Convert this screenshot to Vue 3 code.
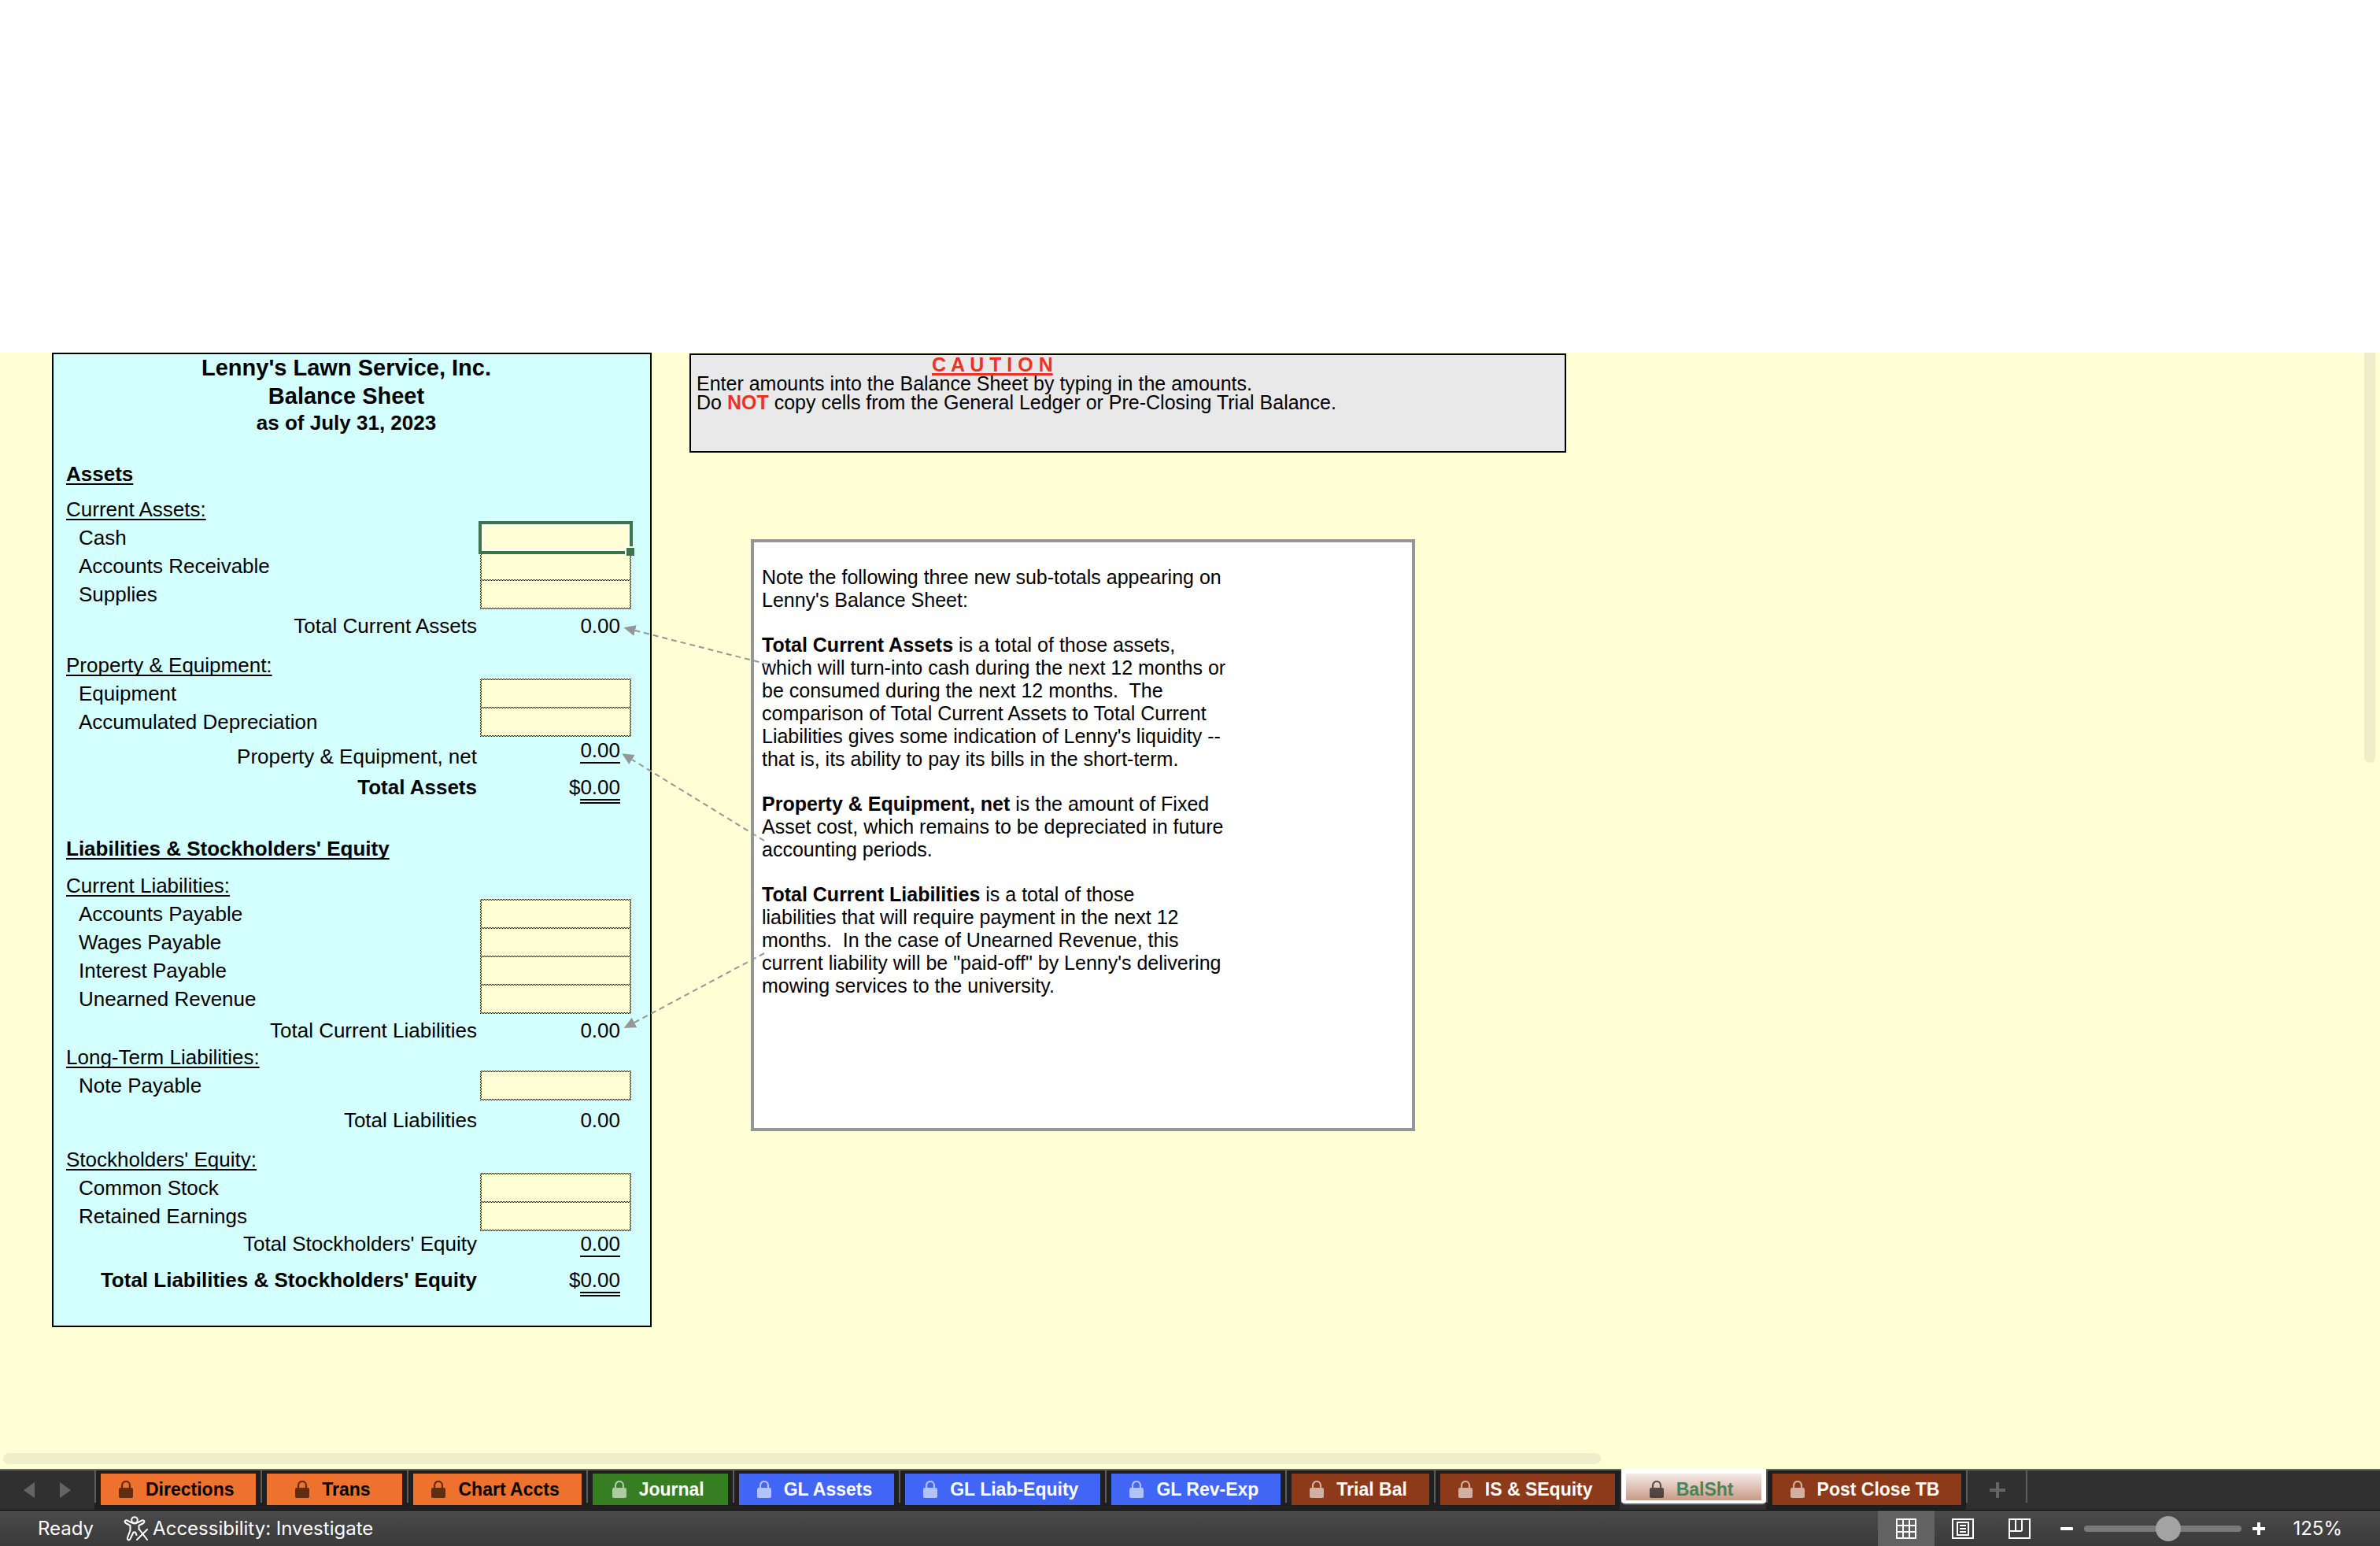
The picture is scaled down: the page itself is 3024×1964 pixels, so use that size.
<template>
    <div class="window">
        <header class="ribbon"></header>

        <main class="canvas">
            <table class="sheet">
                <colgroup>
                    <col class="col-label" />
                    <col class="col-amount" />
                    <col class="col-edge" />
                </colgroup>
                <tbody>
                    <tr v-for="row in rows" :key="row.text" :style="{ height: row.height + 'px' }">
                        <th v-if="row.type === 'title'" class="title" :class="{ small: row.small }" colspan="3">{{ row.text }}</th>
                        <th v-else-if="row.type === 'heading'" class="heading" :class="{ bold: row.bold }" colspan="3">
                            <span>{{ row.text }}</span>
                        </th>
                        <template v-else-if="row.type === 'entry'">
                            <th class="entry-label"><label :for="row.id">{{ row.text }}</label></th>
                            <td class="entry" :class="{ selected: row.id === selected }">
                                <input :id="row.id" v-model="amounts[row.id]" type="text" @focus="selected = row.id" />
                            </td>
                            <td></td>
                        </template>
                        <template v-else>
                            <th class="total-label" :class="{ bold: row.bold }">{{ row.text }}</th>
                            <td class="total" :class="{ raised: row.raised }">
                                <template v-if="row.line === 'double'">$</template><span :class="row.line">0.00</span>
                            </td>
                            <td></td>
                        </template>
                    </tr>
                </tbody>
            </table>

            <div class="side">
                <section class="caution">
                    <h2>C A U T I O N</h2>
                    <p>Enter amounts into the Balance Sheet by typing in the amounts.</p>
                    <p>Do <strong>NOT</strong> copy cells from the General Ledger or Pre-Closing Trial Balance.</p>
                </section>

                <section class="notes">
                    <p v-for="note in notes" :key="note.text"><strong v-if="note.term">{{ note.term }}</strong>{{ note.text }}</p>
                </section>
            </div>

            <svg class="arrows" width="1000" height="900" viewBox="0 0 1000 900">
                <defs>
                    <marker id="head" viewBox="0 0 15 14" refX="0" refY="7" markerWidth="15" markerHeight="14" markerUnits="userSpaceOnUse" orient="auto">
                        <path d="M0 0L15 7L0 14z" fill="#969696" />
                    </marker>
                </defs>
                <g stroke="#969696" stroke-width="2" stroke-dasharray="7 5">
                    <path d="M976 396L807 353" marker-end="url(#head)" />
                    <path d="M971 620L803 517" marker-end="url(#head)" />
                    <path d="M971 763L806 851" marker-end="url(#head)" />
                </g>
            </svg>

            <div class="scroll-x"></div>
            <div class="scroll-y"></div>
        </main>

        <nav class="tabs">
            <div class="tab-arrows">
                <button type="button" aria-label="Previous sheet">
                    <svg width="14" height="20" viewBox="0 0 14 20"><path d="M14 0v20L0 10z" /></svg>
                </button>
                <button type="button" aria-label="Next sheet">
                    <svg width="14" height="20" viewBox="0 0 14 20"><path d="M0 0v20l14-10z" /></svg>
                </button>
            </div>
            <div v-for="tab in tabs" :key="tab.name" class="slot" :class="{ current: tab.name === current }">
                <button type="button" class="tab" :class="tab.color" @click="current = tab.name">
                    <svg class="lock" width="18" height="22" viewBox="0 0 18 22">
                        <path d="M4 10V6a5 5 0 0 1 10 0v4" fill="none" stroke="currentColor" stroke-width="2.200" />
                        <rect y="9" width="18" height="13" rx="2" fill="currentColor" />
                    </svg>
                    <span>{{ tab.name }}</span>
                </button>
            </div>
            <div class="rest">
                <button type="button" class="add" aria-label="Add sheet">
                    <svg width="20" height="20" viewBox="0 0 20 20"><path d="M8 0h4v8h8v4h-8v8h-4v-8h-8v-4h8z" /></svg>
                </button>
            </div>
        </nav>

        <footer class="status">
            <span class="ready">Ready</span>
            <button type="button" class="access">
                <svg width="32" height="32" viewBox="0 0 32 32" fill="none" stroke="currentColor" stroke-width="2" stroke-linecap="round" stroke-linejoin="round">
                    <circle cx="14" cy="5" r="3.800" />
                    <path d="M9.500 8L4.500 5.500C2 4.500.500 7.500 2.800 9L8.500 12V18L5 27.500C4.200 30.500 7.500 31.500 8.500 29L12.500 20.500H15L16.500 24" />
                    <path d="M18.500 8L23.500 5.500C26 4.500 27.500 7.500 25.200 9L19.500 12V17" />
                    <path d="M9.500 8Q14 11 18.500 8" />
                    <path d="M17 30L30 17M20 17L30 30" />
                </svg>
                <span>Accessibility: Investigate</span>
            </button>

            <div class="views">
                <button type="button" class="on" aria-label="Normal view">
                    <svg width="28" height="28" viewBox="0 0 28 28"><path d="M2 2h24v24H2zM10 2v24M18 2v24M2 10h24M2 18h24" /></svg>
                </button>
                <button type="button" aria-label="Page layout view">
                    <svg width="28" height="28" viewBox="0 0 28 28"><path d="M1 2h26v24H1zM7 6h14v16H7zM10 10h8M10 14h8M10 18h8" /></svg>
                </button>
                <button type="button" aria-label="Page break preview">
                    <svg width="28" height="28" viewBox="0 0 28 28"><path d="M1 2h26v24H1zM9 2v15M17 2v15M1 17h16" /></svg>
                </button>
            </div>
            <button type="button" class="step" aria-label="Zoom out">
                <svg width="16" height="16" viewBox="0 0 16 16"><rect y="6" width="16" height="4" rx="1" /></svg>
            </button>
            <input v-model="zoom" class="zoom" type="range" min="0" max="100" aria-label="Zoom" />
            <button type="button" class="step" aria-label="Zoom in">
                <svg width="16" height="16" viewBox="0 0 16 16"><path d="M6 0h4v6h6v4h-6v6h-4v-6h-6v-4h6z" /></svg>
            </button>
            <span class="percent">125%</span>
        </footer>
    </div>
</template>

<script setup>
    import { ref } from "vue";

    const selected = ref("cash");
    const current = ref("BalSht");
    const zoom = ref(54);
    const amounts = ref({});

    const rows = [
        { type: "title", text: "Lenny's Lawn Service, Inc.", height: 35 },
        { type: "title", text: "Balance Sheet", height: 36 },
        { type: "title", text: "as of July 31, 2023", height: 34, small: true },
        { type: "heading", text: "Assets", height: 65, bold: true },
        { type: "heading", text: "Current Assets:", height: 45 },
        { type: "entry", id: "cash", text: "Cash", height: 36 },
        { type: "entry", id: "receivable", text: "Accounts Receivable", height: 36 },
        { type: "entry", id: "supplies", text: "Supplies", height: 36 },
        { type: "total", text: "Total Current Assets", height: 40 },
        { type: "heading", text: "Property & Equipment:", height: 50 },
        { type: "entry", id: "equipment", text: "Equipment", height: 36 },
        { type: "entry", id: "depreciation", text: "Accumulated Depreciation", height: 36 },
        { type: "total", text: "Property & Equipment, net", height: 44, line: "single", raised: true },
        { type: "total", text: "Total Assets", height: 39, line: "double", bold: true },
        { type: "heading", text: "Liabilities & Stockholders' Equity", height: 78, bold: true },
        { type: "heading", text: "Current Liabilities:", height: 47 },
        { type: "entry", id: "payable", text: "Accounts Payable", height: 36 },
        { type: "entry", id: "wages", text: "Wages Payable", height: 36 },
        { type: "entry", id: "interest", text: "Interest Payable", height: 36 },
        { type: "entry", id: "unearned", text: "Unearned Revenue", height: 36 },
        { type: "total", text: "Total Current Liabilities", height: 40 },
        { type: "heading", text: "Long-Term Liabilities:", height: 34 },
        { type: "entry", id: "note", text: "Note Payable", height: 36 },
        { type: "total", text: "Total Liabilities", height: 44 },
        { type: "heading", text: "Stockholders' Equity:", height: 50 },
        { type: "entry", id: "stock", text: "Common Stock", height: 36 },
        { type: "entry", id: "retained", text: "Retained Earnings", height: 36 },
        { type: "total", text: "Total Stockholders' Equity", height: 35, line: "single" },
        { type: "total", text: "Total Liabilities & Stockholders' Equity", height: 46, line: "double", bold: true },
    ];

    const notes = [
        { text: "Note the following three new sub-totals appearing on\nLenny's Balance Sheet:" },
        {
            term: "Total Current Assets",
            text: " is a total of those assets,\nwhich will turn-into cash during the next 12 months or\nbe consumed during the next 12 months.  The\ncomparison of Total Current Assets to Total Current\nLiabilities gives some indication of Lenny's liquidity --\nthat is, its ability to pay its bills in the short-term.",
        },
        {
            term: "Property & Equipment, net",
            text: " is the amount of Fixed\nAsset cost, which remains to be depreciated in future\naccounting periods.",
        },
        {
            term: "Total Current Liabilities",
            text: " is a total of those\nliabilities that will require payment in the next 12\nmonths.  In the case of Unearned Revenue, this\ncurrent liability will be \"paid-off\" by Lenny's delivering\nmowing services to the university.",
        },
    ];

    const tabs = [
        { name: "Directions", color: "orange" },
        { name: "Trans", color: "orange" },
        { name: "Chart Accts", color: "orange" },
        { name: "Journal", color: "green" },
        { name: "GL Assets", color: "blue" },
        { name: "GL Liab-Equity", color: "blue" },
        { name: "GL Rev-Exp", color: "blue" },
        { name: "Trial Bal", color: "brown" },
        { name: "IS & SEquity", color: "brown" },
        { name: "BalSht", color: "brown" },
        { name: "Post Close TB", color: "brown" },
    ];
</script>

<style>
body{
    margin: 0;
    background: #fff;
}
</style>

<style scoped>
.window{
    display: flex;
    flex-direction: column;
    min-height: 100vh;
    font-family: "Liberation Sans", Arial, sans-serif;
    color: #000;
}

button{
    border: 0;
    padding: 0;
    background: none;
    font: inherit;
    color: inherit;
}

svg{
    display: block;
    flex: none;
}

.ribbon{
    height: 448px;
}

.canvas{
    position: relative;
    flex: 1;
    display: flex;
    align-items: flex-start;
    gap: 48px;
    padding: 0 66px;
    background: #fffed5;
}

/* balance sheet */
.sheet{
    box-sizing: border-box;
    width: 762px;
    flex: none;
    table-layout: fixed;
    border-collapse: separate;
    border-spacing: 0;
    border: 2px solid #000;
    padding-bottom: 40px;
    background: #d4ffff;
    font-size: 26px;
    line-height: 30px;
}

.col-amount{
    width: 190px;
}

.col-edge{
    width: 25px;
}

.sheet th,
.sheet td{
    padding: 0 0 3px;
    vertical-align: bottom;
    text-align: left;
    font-weight: normal;
    white-space: nowrap;
}

.sheet .title{
    padding-right: 14px;
    text-align: center;
    font-size: 29px;
    font-weight: bold;
}

.sheet .small{
    font-size: 26px;
}

.sheet .heading{
    padding-left: 16px;
}

.heading span{
    text-decoration: underline;
    text-decoration-thickness: 2px;
    text-decoration-skip-ink: none;
    text-underline-offset: 3px;
}

.sheet .bold{
    font-weight: bold;
}

.sheet .entry-label{
    padding-left: 32px;
}

.sheet .total-label{
    padding-right: 5px;
    text-align: right;
}

.sheet .total{
    padding-right: 13px;
    text-align: right;
}

.sheet .raised{
    padding-bottom: 11px;
}

.single,
.double{
    display: inline-block;
}

.single{
    border-bottom: 2px solid #000;
    margin-bottom: -2px;
}

.double{
    border-bottom: 6px double #000;
    margin-bottom: -6px;
}

.sheet .entry{
    position: relative;
    padding: 0;
}

.sheet .selected{
    z-index: 1;
}

.entry input{
    display: block;
    box-sizing: border-box;
    width: calc(100% + 2px);
    height: 38px;
    margin: -1px;
    border: 2px solid transparent;
    padding: 0 12px;
    background:
        linear-gradient(#fffed5, #fffed5) padding-box,
        repeating-conic-gradient(#000 0 25%, #fffed5 0 50%) 0 0 / 2px 2px border-box;
    font: inherit;
    text-align: right;
    outline: none;
}

.selected::after{
    content: "";
    position: absolute;
    inset: -3px;
    border: 4px solid #3d754b;
    box-shadow: inset 0 0 0 2px #fff;
    pointer-events: none;
}

.selected::before{
    content: "";
    position: absolute;
    z-index: 1;
    right: -5px;
    bottom: -5px;
    width: 10px;
    height: 10px;
    border: solid #fff;
    border-width: 2px 0 0 2px;
    background: #3d754b;
}

/* boxes to the right */
.side{
    flex: none;
    font-size: 25px;
}

.caution{
    box-sizing: border-box;
    width: 1114px;
    min-height: 126px;
    margin-top: 1px;
    border: 2px solid #000;
    padding: 0 7px;
    background: #e9e9e9;
    line-height: 24px;
}

.caution h2{
    margin: 0;
    padding-left: 299px;
    font-size: 25px;
    color: #ed3224;
    text-decoration: underline;
    text-decoration-thickness: 3px;
    text-underline-offset: 2px;
}

.caution p{
    margin: 0;
}

.caution strong{
    color: #ed3224;
}

.notes{
    box-sizing: border-box;
    width: 844px;
    min-height: 752px;
    margin: 110px 0 0 78px;
    border: 4px solid #969696;
    padding: 30px 10px;
    background: #fff;
    line-height: 29px;
}

.notes p{
    margin: 0 0 28px;
    white-space: pre-wrap;
}

.arrows{
    position: absolute;
    left: 0;
    top: 0;
    pointer-events: none;
}

.scroll-x,
.scroll-y{
    position: absolute;
    background: #eeeecb;
}

.scroll-x{
    left: 4px;
    bottom: 6px;
    width: 2030px;
    height: 14px;
    border-radius: 7px;
}

.scroll-y{
    right: 6px;
    top: 0;
    width: 14px;
    height: 521px;
    border-radius: 0 0 7px 7px;
}

/* sheet tabs */
.tabs{
    display: flex;
    height: 50px;
    border-top: 2px solid #6a6a68;
    background: #1f1f1f;
    font-size: 23px;
    font-weight: bold;
}

.tab-arrows{
    display: flex;
    align-items: center;
    gap: 32px;
    width: 90px;
    padding-left: 30px;
    background: #303030;
    fill: #646464;
}

.slot{
    position: relative;
    padding: 4px 6px 0 8px;
}

.slot::before,
.rest::before,
.rest::after{
    content: "";
    position: absolute;
    left: 0;
    top: 0;
    width: 2px;
    height: 41px;
    background: #5c5c5c;
}

.tab{
    display: flex;
    align-items: center;
    justify-content: center;
    gap: 16px;
    box-sizing: border-box;
    min-width: 172px;
    height: 40px;
    padding: 0 28px 0 23px;
    white-space: nowrap;
}

.lock{
    opacity: 0.6;
}

.orange{
    background: #ee722e;
    color: #000;
}

.green{
    background: #377d22;
    color: #fff;
}

.blue{
    background: #4166f5;
    color: #fff;
}

.brown{
    background: #8c3a19;
    color: #fff;
}

.current{
    background: #303030;
}

.current::before{
    left: 2px;
    right: 0;
    top: -2px;
    width: auto;
    height: 44px;
    border-bottom: 2px solid #55585c;
    border-radius: 0 0 5px 5px;
    background: #fff;
}

.current .tab{
    position: relative;
    height: 34px;
    padding-top: 6px;
    background: linear-gradient(#f5ebe8, #c99a87);
    color: #44855a;
}

.current .lock{
    color: #000;
}

.rest{
    position: relative;
    flex: 1;
    display: flex;
    align-items: center;
    padding-left: 30px;
    background: #303030;
    fill: #646464;
}

.rest::after{
    left: 76px;
}

/* status bar */
.status{
    display: flex;
    align-items: center;
    height: 45px;
    border-top: 1px solid #000;
    padding: 0 48px;
    background: linear-gradient(#4a4a4a, #3a3a3a);
    color: #fff;
    font-family: Inter, "Liberation Sans", sans-serif;
    font-size: 24px;
}

.access{
    display: flex;
    align-items: center;
    gap: 5px;
    margin-left: 38px;
}

.views{
    display: flex;
    align-self: stretch;
    margin-left: auto;
}

.views button{
    display: flex;
    align-items: center;
    justify-content: center;
    width: 72px;
}

.views svg{
    fill: none;
    stroke: #fff;
    stroke-width: 2;
}

.views .on{
    background: #626262;
}

.step{
    fill: #fff;
}

.views + .step{
    margin-left: 16px;
}

.zoom{
    appearance: none;
    width: 200px;
    height: 32px;
    margin: 0 14px;
    background: none;
}

.zoom::-webkit-slider-runnable-track{
    height: 8px;
    border-radius: 4px;
    background: #7a7a7a;
}

.zoom::-webkit-slider-thumb{
    appearance: none;
    width: 32px;
    height: 32px;
    margin-top: -12px;
    border-radius: 50%;
    background: #a3a3a3;
}

.percent{
    margin-left: 35px;
}
</style>
